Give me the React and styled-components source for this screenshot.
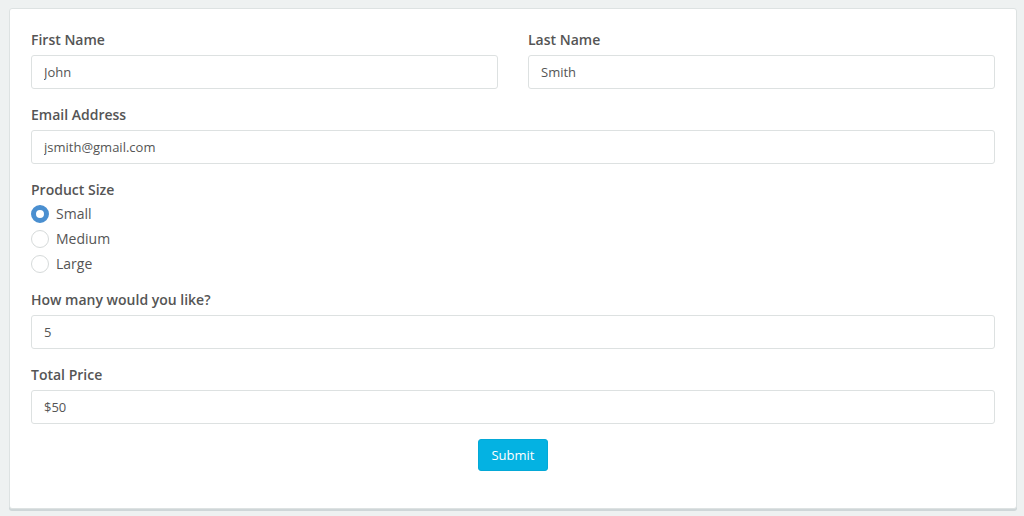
import React, { useState } from 'react';
import styled, { createGlobalStyle } from 'styled-components';

const GlobalStyle = createGlobalStyle`
    html, body {
        margin: 0;
        padding: 0;
        background: #eef1f1;
        font-family: "Open Sans", "Noto Sans", sans-serif;
    }
    * {
        box-sizing: border-box;
    }
`;

const Page = styled.div`
    padding: 8px 7px 7px 9px;
`;

const Card = styled.form`
    background: #fff;
    border: 1px solid #dde2e2;
    border-radius: 3px;
    box-shadow: 0 2px 0 #cfd6d8;
    padding: 21px 21px 37px 21px;
`;

const Row = styled.div`
    display: grid;
    grid-template-columns: 1fr 1fr;
    column-gap: 30px;
`;

const Group = styled.div`
    margin-bottom: ${props => props.$gap || 16}px;
`;

const Label = styled.label`
    display: block;
    font-size: 14px;
    font-weight: 600;
    line-height: 20px;
    color: #555;
    margin-bottom: ${props => props.$tight ? '1px' : '5px'};
`;

const Input = styled.input`
    display: block;
    width: 100%;
    height: 34px;
    padding: 6px 12px;
    font-family: inherit;
    font-size: 13px;
    color: #555;
    border: 1px solid #dde1e1;
    border-radius: 3px;
    outline: none;
    background: #fff;
`;

const RadioRow = styled.label`
    display: flex;
    align-items: center;
    height: 25px;
    font-size: 14px;
    color: #555;
    cursor: pointer;
`;

const RadioDot = styled.span`
    width: 18px;
    height: 18px;
    border-radius: 50%;
    margin-right: 7px;
    border: ${props => props.$checked ? '5px solid #4a8fd0' : '1px solid #d6dada'};
    background: #fff;
    flex: none;
`;

const HiddenRadio = styled.input`
    display: none;
`;

const Actions = styled.div`
    display: flex;
    justify-content: center;
`;

const Button = styled.button`
    height: 32px;
    padding: 0 12px;
    font-family: inherit;
    font-size: 13px;
    color: #fff;
    background: #04b2e2;
    border: 1px solid #04a9d7;
    border-radius: 3px;
    cursor: pointer;
`;

const sizes = ['Small', 'Medium', 'Large'];

export default function App() {
    const [size, setSize] = useState('Small');

    return (
        <Page>
            <GlobalStyle />
            <Card onSubmit={e => e.preventDefault()}>
                <Row>
                    <Group>
                        <Label>First Name</Label>
                        <Input defaultValue="John" />
                    </Group>
                    <Group>
                        <Label>Last Name</Label>
                        <Input defaultValue="Smith" />
                    </Group>
                </Row>
                <Group>
                    <Label>Email Address</Label>
                    <Input defaultValue="jsmith@gmail.com" />
                </Group>
                <Group $gap={14}>
                    <Label $tight>Product Size</Label>
                    {sizes.map(s => (
                        <RadioRow key={s}>
                            <HiddenRadio
                                type="radio"
                                name="size"
                                checked={size === s}
                                onChange={() => setSize(s)}
                            />
                            <RadioDot $checked={size === s} />
                            {s}
                        </RadioRow>
                    ))}
                </Group>
                <Group>
                    <Label>How many would you like?</Label>
                    <Input defaultValue="5" />
                </Group>
                <Group $gap={15}>
                    <Label>Total Price</Label>
                    <Input defaultValue="$50" />
                </Group>
                <Actions>
                    <Button type="submit">Submit</Button>
                </Actions>
            </Card>
        </Page>
    );
}
